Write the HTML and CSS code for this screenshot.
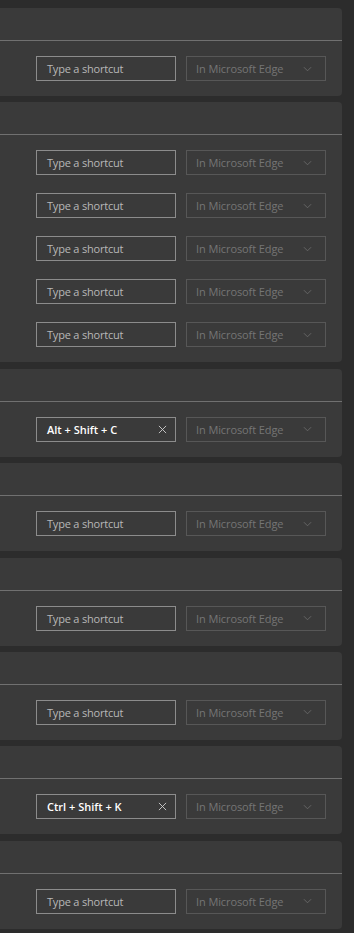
FILE: index.html
```html
<!DOCTYPE html>
<html lang="en">
<head>
<meta charset="utf-8">
<title>Keyboard shortcuts</title>
<link rel="stylesheet" href="styles.css">
</head>
<body>
<main class="list">
  <section class="card">
    <div class="card-head"></div>
    <div class="card-body">
      <div class="row">
        <div class="shortcut"><span class="placeholder">Type a shortcut</span></div>
        <div class="scope"><span>In Microsoft Edge</span><svg class="chev" viewBox="0 0 10 6"><path d="M1 1l4 4 4-4"/></svg></div>
      </div>
    </div>
  </section>

  <section class="card">
    <div class="card-head"></div>
    <div class="card-body">
      <div class="row">
        <div class="shortcut"><span class="placeholder">Type a shortcut</span></div>
        <div class="scope"><span>In Microsoft Edge</span><svg class="chev" viewBox="0 0 10 6"><path d="M1 1l4 4 4-4"/></svg></div>
      </div>
      <div class="row">
        <div class="shortcut"><span class="placeholder">Type a shortcut</span></div>
        <div class="scope"><span>In Microsoft Edge</span><svg class="chev" viewBox="0 0 10 6"><path d="M1 1l4 4 4-4"/></svg></div>
      </div>
      <div class="row">
        <div class="shortcut"><span class="placeholder">Type a shortcut</span></div>
        <div class="scope"><span>In Microsoft Edge</span><svg class="chev" viewBox="0 0 10 6"><path d="M1 1l4 4 4-4"/></svg></div>
      </div>
      <div class="row">
        <div class="shortcut"><span class="placeholder">Type a shortcut</span></div>
        <div class="scope"><span>In Microsoft Edge</span><svg class="chev" viewBox="0 0 10 6"><path d="M1 1l4 4 4-4"/></svg></div>
      </div>
      <div class="row">
        <div class="shortcut"><span class="placeholder">Type a shortcut</span></div>
        <div class="scope"><span>In Microsoft Edge</span><svg class="chev" viewBox="0 0 10 6"><path d="M1 1l4 4 4-4"/></svg></div>
      </div>
    </div>
  </section>

  <section class="card">
    <div class="card-head"></div>
    <div class="card-body">
      <div class="row">
        <div class="shortcut"><span class="keys">Alt + Shift + C</span><svg class="clear" viewBox="0 0 10 10"><path d="M1 1l8 8M9 1l-8 8"/></svg></div>
        <div class="scope"><span>In Microsoft Edge</span><svg class="chev" viewBox="0 0 10 6"><path d="M1 1l4 4 4-4"/></svg></div>
      </div>
    </div>
  </section>

  <section class="card">
    <div class="card-head"></div>
    <div class="card-body">
      <div class="row">
        <div class="shortcut"><span class="placeholder">Type a shortcut</span></div>
        <div class="scope"><span>In Microsoft Edge</span><svg class="chev" viewBox="0 0 10 6"><path d="M1 1l4 4 4-4"/></svg></div>
      </div>
    </div>
  </section>

  <section class="card">
    <div class="card-head"></div>
    <div class="card-body">
      <div class="row">
        <div class="shortcut"><span class="placeholder">Type a shortcut</span></div>
        <div class="scope"><span>In Microsoft Edge</span><svg class="chev" viewBox="0 0 10 6"><path d="M1 1l4 4 4-4"/></svg></div>
      </div>
    </div>
  </section>

  <section class="card">
    <div class="card-head"></div>
    <div class="card-body">
      <div class="row">
        <div class="shortcut"><span class="placeholder">Type a shortcut</span></div>
        <div class="scope"><span>In Microsoft Edge</span><svg class="chev" viewBox="0 0 10 6"><path d="M1 1l4 4 4-4"/></svg></div>
      </div>
    </div>
  </section>

  <section class="card">
    <div class="card-head"></div>
    <div class="card-body">
      <div class="row">
        <div class="shortcut"><span class="keys">Ctrl + Shift + K</span><svg class="clear" viewBox="0 0 10 10"><path d="M1 1l8 8M9 1l-8 8"/></svg></div>
        <div class="scope"><span>In Microsoft Edge</span><svg class="chev" viewBox="0 0 10 6"><path d="M1 1l4 4 4-4"/></svg></div>
      </div>
    </div>
  </section>

  <section class="card">
    <div class="card-head"></div>
    <div class="card-body">
      <div class="row">
        <div class="shortcut"><span class="placeholder">Type a shortcut</span></div>
        <div class="scope"><span>In Microsoft Edge</span><svg class="chev" viewBox="0 0 10 6"><path d="M1 1l4 4 4-4"/></svg></div>
      </div>
    </div>
  </section>
</main>
</body>
</html>
```
FILE: styles.css
```css
html, body {
  margin: 0;
  padding: 0;
  background: #2c2c2c;
  font-family: "Open Sans", "Noto Sans", sans-serif;
  font-size: 11px;
}

.list {
  display: flex;
  flex-direction: column;
  gap: 6.4px;
  padding: 8px 12px 0 0;
}

.card {
  background: #3a3a3a;
  border-radius: 0 4px 4px 0;
}

.card-head {
  height: 32px;
  border-bottom: 1px solid #707070;
}

.card-body {
  display: flex;
  flex-direction: column;
  gap: 18px;
  padding: 15px 16px 15px 0;
}

.row {
  display: flex;
  justify-content: flex-end;
  gap: 10px;
}

.shortcut, .scope {
  box-sizing: border-box;
  width: 140px;
  height: 25px;
  display: flex;
  align-items: center;
  justify-content: space-between;
}

.shortcut {
  border: 1px solid #8c8c8c;
  padding: 0 8px 0 10px;
}

.placeholder {
  color: #b8b8b8;
  letter-spacing: -0.2px;
}

.keys {
  color: #ffffff;
  font-weight: 600;
}

.clear {
  width: 9px;
  height: 9px;
  fill: none;
  stroke: #d0d0d0;
  stroke-width: 1;
}

.scope {
  border: 1px solid #575757;
  padding: 0 13px 0 9px;
  color: #757575;
  letter-spacing: -0.1px;
}

.chev {
  width: 9px;
  height: 6px;
  fill: none;
  stroke: #6a6a6a;
  stroke-width: 1;
}
```
